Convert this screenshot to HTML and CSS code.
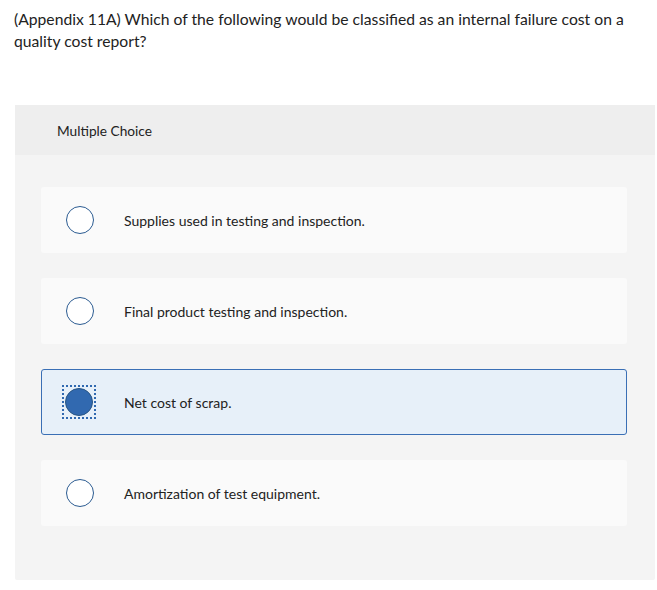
FILE: index.html
```html
<!DOCTYPE html>
<html>
<head>
<meta charset="utf-8">
<link rel="stylesheet" href="styles.css">
</head>
<body>
<div class="question">(Appendix 11A) Which of the following would be classified as an internal failure cost on a quality cost report?</div>
<div class="panel">
  <div class="panel-head">Multiple Choice</div>
  <div class="panel-body">
    <div class="option">
      <span class="radio"></span>
      <span class="label">Supplies used in testing and inspection.</span>
    </div>
    <div class="option">
      <span class="radio"></span>
      <span class="label">Final product testing and inspection.</span>
    </div>
    <div class="option selected">
      <span class="focus"><span class="radio"></span></span>
      <span class="label">Net cost of scrap.</span>
    </div>
    <div class="option">
      <span class="radio"></span>
      <span class="label">Amortization of test equipment.</span>
    </div>
  </div>
</div>
</body>
</html>
```
FILE: styles.css
```css
* { box-sizing: border-box; }
body {
  margin: 0;
  background: #ffffff;
  font-family: Lato, "Liberation Sans", sans-serif;
  color: #222222;
}
.question {
  padding: 8px 20px 0 14px;
  font-size: 15.7px;
  line-height: 22px;
  height: 105px;
}
.panel {
  margin-left: 15px;
  width: 640px;
  height: 475px;
  background: #f4f4f4;
  border-radius: 2px;
}
.panel-head {
  height: 50px;
  background: #eeeeee;
  padding-left: 42px;
  display: flex;
  align-items: center;
  font-size: 13.7px;
  color: #222;
}
.panel-body {
  padding: 32px 28px 0 26px;
  display: flex;
  flex-direction: column;
  gap: 25px;
}
.option {
  height: 66px;
  background: #fafafa;
  border-radius: 3px;
  display: flex;
  align-items: center;
  padding-left: 25px;
  font-size: 14px;
  color: #222;
}
.option.selected {
  background: #e7f0f9;
  border: 1px solid #3a6fb5;
  padding-left: 20px;
}
.radio {
  width: 28px;
  height: 28px;
  border-radius: 50%;
  border: 1.5px solid #2b5b91;
  background: #ffffff;
  flex: none;
}
.focus {
  display: flex;
  padding: 1px;
  border: 2px dotted #3069b0;
  margin-right: 28px;
}
.selected .radio {
  background: #3169b0;
  border: 1px solid #285584;
}
.option > .radio {
  margin-right: 30px;
}
```
